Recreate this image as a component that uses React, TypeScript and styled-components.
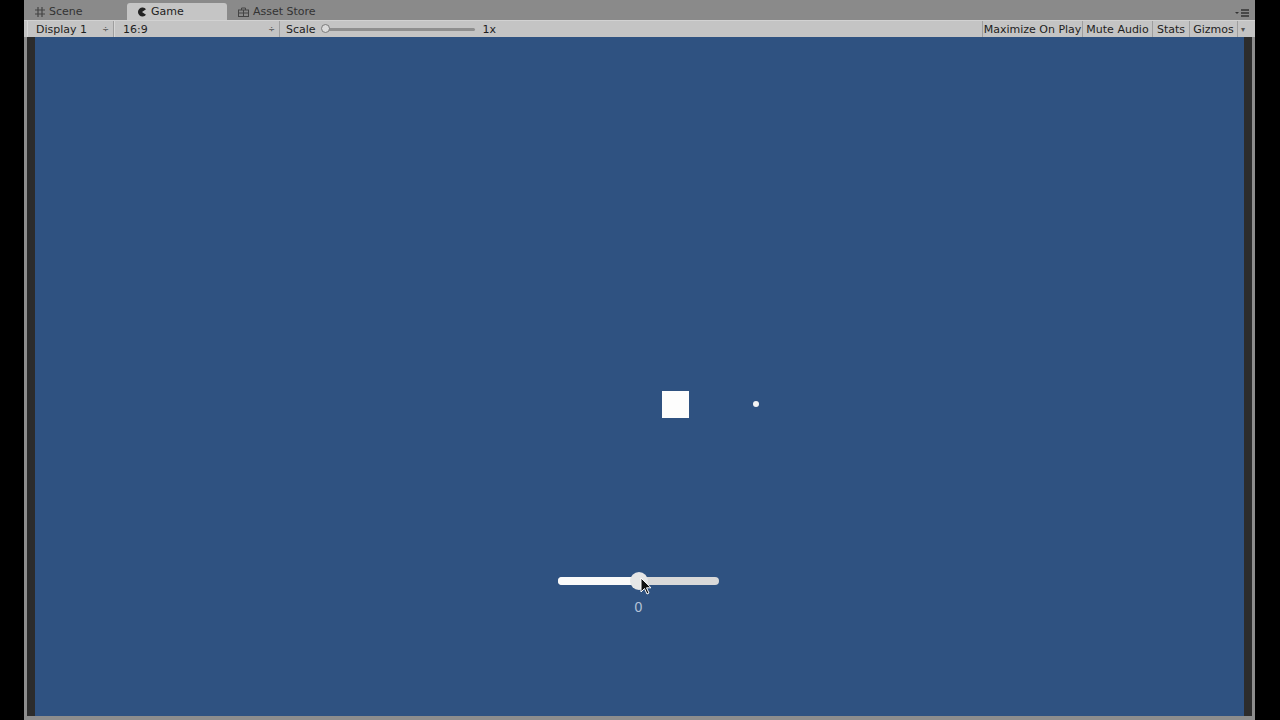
import { createGlobalStyle, styled } from 'styled-components';

const GlobalStyle = createGlobalStyle`
  html, body {
    margin: 0;
    padding: 0;
    background: #000;
    overflow: hidden;
  }
`;

const Screen = styled.div`
  width: 1280px;
  height: 720px;
  display: flex;
  background: #000;
  font-family: 'DejaVu Sans', 'Liberation Sans', sans-serif;
`;

const Black = styled.div<{ $w: number }>`
  width: ${(p) => p.$w}px;
  flex: none;
  background: #000;
`;

const Editor = styled.div`
  flex: 1;
  display: flex;
  flex-direction: column;
  background: #8d8d8d;
`;

const TabBar = styled.div`
  height: 20px;
  flex: none;
  display: flex;
  align-items: flex-end;
  background: #8a8a8a;
  padding-left: 5px;
  position: relative;
`;

const Tab = styled.div<{ $active?: boolean; $w: number; $pad: number }>`
  width: ${(p) => p.$w}px;
  height: 17px;
  display: flex;
  align-items: center;
  gap: 4px;
  padding-left: ${(p) => p.$pad}px;
  box-sizing: border-box;
  font-size: 11px;
  color: ${(p) => (p.$active ? '#1e1e1e' : '#333')};
  background: ${(p) => (p.$active ? '#c5c5c5' : 'transparent')};
  border-radius: 3px 3px 0 0;
`;

const TabMenu = styled.div`
  position: absolute;
  right: 6px;
  top: 9px;
  display: flex;
  align-items: center;
  gap: 1px;
`;

const Toolbar = styled.div`
  height: 17px;
  flex: none;
  display: flex;
  align-items: stretch;
  background: #c4c4c4;
  border-top: 1px solid #d2d2d2;
  box-sizing: border-box;
  font-size: 11px;
  color: #1e1e1e;
  padding-left: 3px;
  padding-right: 7px;
`;

const Drop = styled.div<{ $w: number }>`
  width: ${(p) => p.$w}px;
  display: flex;
  align-items: center;
  justify-content: space-between;
  padding: 0 4px 0 8px;
  box-sizing: border-box;
  border-right: 1px solid #9e9e9e;
  border-left: 1px solid #d6d6d6;
`;

const Arrows = styled.span`
  font-size: 8px;
  color: #555;
`;

const ScaleGroup = styled.div`
  display: flex;
  align-items: center;
  padding-left: 6px;
  gap: 6px;
`;

const ScaleTrack = styled.div`
  width: 150px;
  height: 3px;
  background: #8f8f8f;
  border-radius: 2px;
  position: relative;
  margin-left: 3px;
`;

const ScaleThumb = styled.div`
  position: absolute;
  left: -4px;
  top: -4px;
  width: 9px;
  height: 9px;
  border-radius: 50%;
  background: #dadada;
  border: 1px solid #7a7a7a;
  box-sizing: border-box;
`;

const ScaleValue = styled.span`
  margin-left: 2px;
`;

const Spacer = styled.div`
  flex: 1;
`;

const ToolButton = styled.div<{ $w: number }>`
  width: ${(p) => p.$w}px;
  display: flex;
  align-items: center;
  justify-content: center;
  box-sizing: border-box;
  border-left: 1px solid #9e9e9e;
`;

const Body = styled.div`
  flex: 1;
  display: flex;
`;

const DarkStrip = styled.div<{ $w: number }>`
  width: ${(p) => p.$w}px;
  flex: none;
  background: #2c2c2c;
`;

const EdgeStrip = styled.div`
  width: 3px;
  flex: none;
  background: #8d8d8d;
`;

const GameView = styled.div`
  flex: 1;
  background: #2f5281;
  position: relative;
`;

const Cube = styled.div`
  position: absolute;
  left: 627px;
  top: 354px;
  width: 27px;
  height: 27px;
  background: #fdfdfd;
`;

const Dot = styled.div`
  position: absolute;
  left: 718px;
  top: 364px;
  width: 6px;
  height: 6px;
  border-radius: 50%;
  background: #f4f4f4;
`;

const UiSlider = styled.div`
  position: absolute;
  left: 523px;
  top: 540px;
  width: 161px;
  display: flex;
  flex-direction: column;
  align-items: center;
`;

const Track = styled.div`
  width: 100%;
  height: 8px;
  border-radius: 4px;
  background: #d9d9d9;
  position: relative;
  display: flex;
`;

const Fill = styled.div`
  height: 100%;
  border-radius: 4px 0 0 4px;
  background: #fafafa;
`;

const Knob = styled.div`
  position: absolute;
  top: -5px;
  width: 18px;
  height: 18px;
  margin-left: -9px;
  border-radius: 50%;
  background: #e6e6e6;
`;

const Cursor = styled.svg`
  position: absolute;
  left: 82px;
  top: 0px;
`;

const ValueLabel = styled.div`
  margin-top: 14px;
  font-size: 14px;
  color: #b4c3d8;
  font-family: 'Liberation Sans', Arial, sans-serif;
`;

const BottomBar = styled.div`
  height: 4px;
  flex: none;
  background: #8d8d8d;
`;

function GridIcon() {
  return (
    <svg width="10" height="10" viewBox="0 0 10 10">
      <path d="M3 0v10M7 0v10M0 3h10M0 7h10" stroke="#444" strokeWidth="1.2" fill="none" />
    </svg>
  );
}

function PacIcon() {
  return (
    <svg width="10" height="10" viewBox="0 0 10 10">
      <path d="M9 2.2A4.5 4.5 0 1 0 9 7.8L5 5Z" fill="#222" />
    </svg>
  );
}

function StoreIcon() {
  return (
    <svg width="11" height="10" viewBox="0 0 11 10">
      <rect x="0.5" y="3" width="10" height="6.5" fill="none" stroke="#444" />
      <path d="M3.5 3V1h4v2M5.5 3v6.5M0.5 6h10" stroke="#444" fill="none" />
    </svg>
  );
}

export default function App() {
  const value = 0.5;
  return (
    <>
      <GlobalStyle />
      <Screen>
        <Black $w={24} />
        <Editor>
          <TabBar>
            <Tab $w={98} $pad={6}>
              <GridIcon />
              Scene
            </Tab>
            <Tab $w={100} $pad={10} $active>
              <PacIcon />
              Game
            </Tab>
            <Tab $w={120} $pad={11}>
              <StoreIcon />
              Asset Store
            </Tab>
            <TabMenu>
              <svg width="14" height="8" viewBox="0 0 14 8">
                <path d="M0 3h4L2 5Z" fill="#333" />
                <path d="M6 1h8M6 4h8M6 7h8" stroke="#333" strokeWidth="1.3" />
              </svg>
            </TabMenu>
          </TabBar>
          <Toolbar>
            <Drop $w={87}>
              Display 1<Arrows>÷</Arrows>
            </Drop>
            <Drop $w={166}>
              16:9<Arrows>÷</Arrows>
            </Drop>
            <ScaleGroup>
              Scale
              <ScaleTrack>
                <ScaleThumb />
              </ScaleTrack>
              <ScaleValue>1x</ScaleValue>
            </ScaleGroup>
            <Spacer />
            <ToolButton $w={100}>Maximize On Play</ToolButton>
            <ToolButton $w={70}>Mute Audio</ToolButton>
            <ToolButton $w={37}>Stats</ToolButton>
            <ToolButton $w={48}>Gizmos</ToolButton>
            <ToolButton $w={11}>
              <Arrows>▾</Arrows>
            </ToolButton>
          </Toolbar>
          <Body>
            <EdgeStrip />
            <DarkStrip $w={8} />
            <GameView>
              <Cube />
              <Dot />
              <UiSlider>
                <Track>
                  <Fill style={{ width: `${value * 100}%` }} />
                  <Knob style={{ left: `${value * 100}%` }} />
                  <Cursor width="12" height="18" viewBox="0 0 12 18">
                    <path d="M1 1v14l3.5-3.5 2.5 5.5 2-1-2.5-5.2H11Z" fill="#111" stroke="#fff" strokeWidth="1" />
                  </Cursor>
                </Track>
                <ValueLabel>0</ValueLabel>
              </UiSlider>
            </GameView>
            <DarkStrip $w={8} />
            <EdgeStrip />
          </Body>
          <BottomBar />
        </Editor>
        <Black $w={25} />
      </Screen>
    </>
  );
}
